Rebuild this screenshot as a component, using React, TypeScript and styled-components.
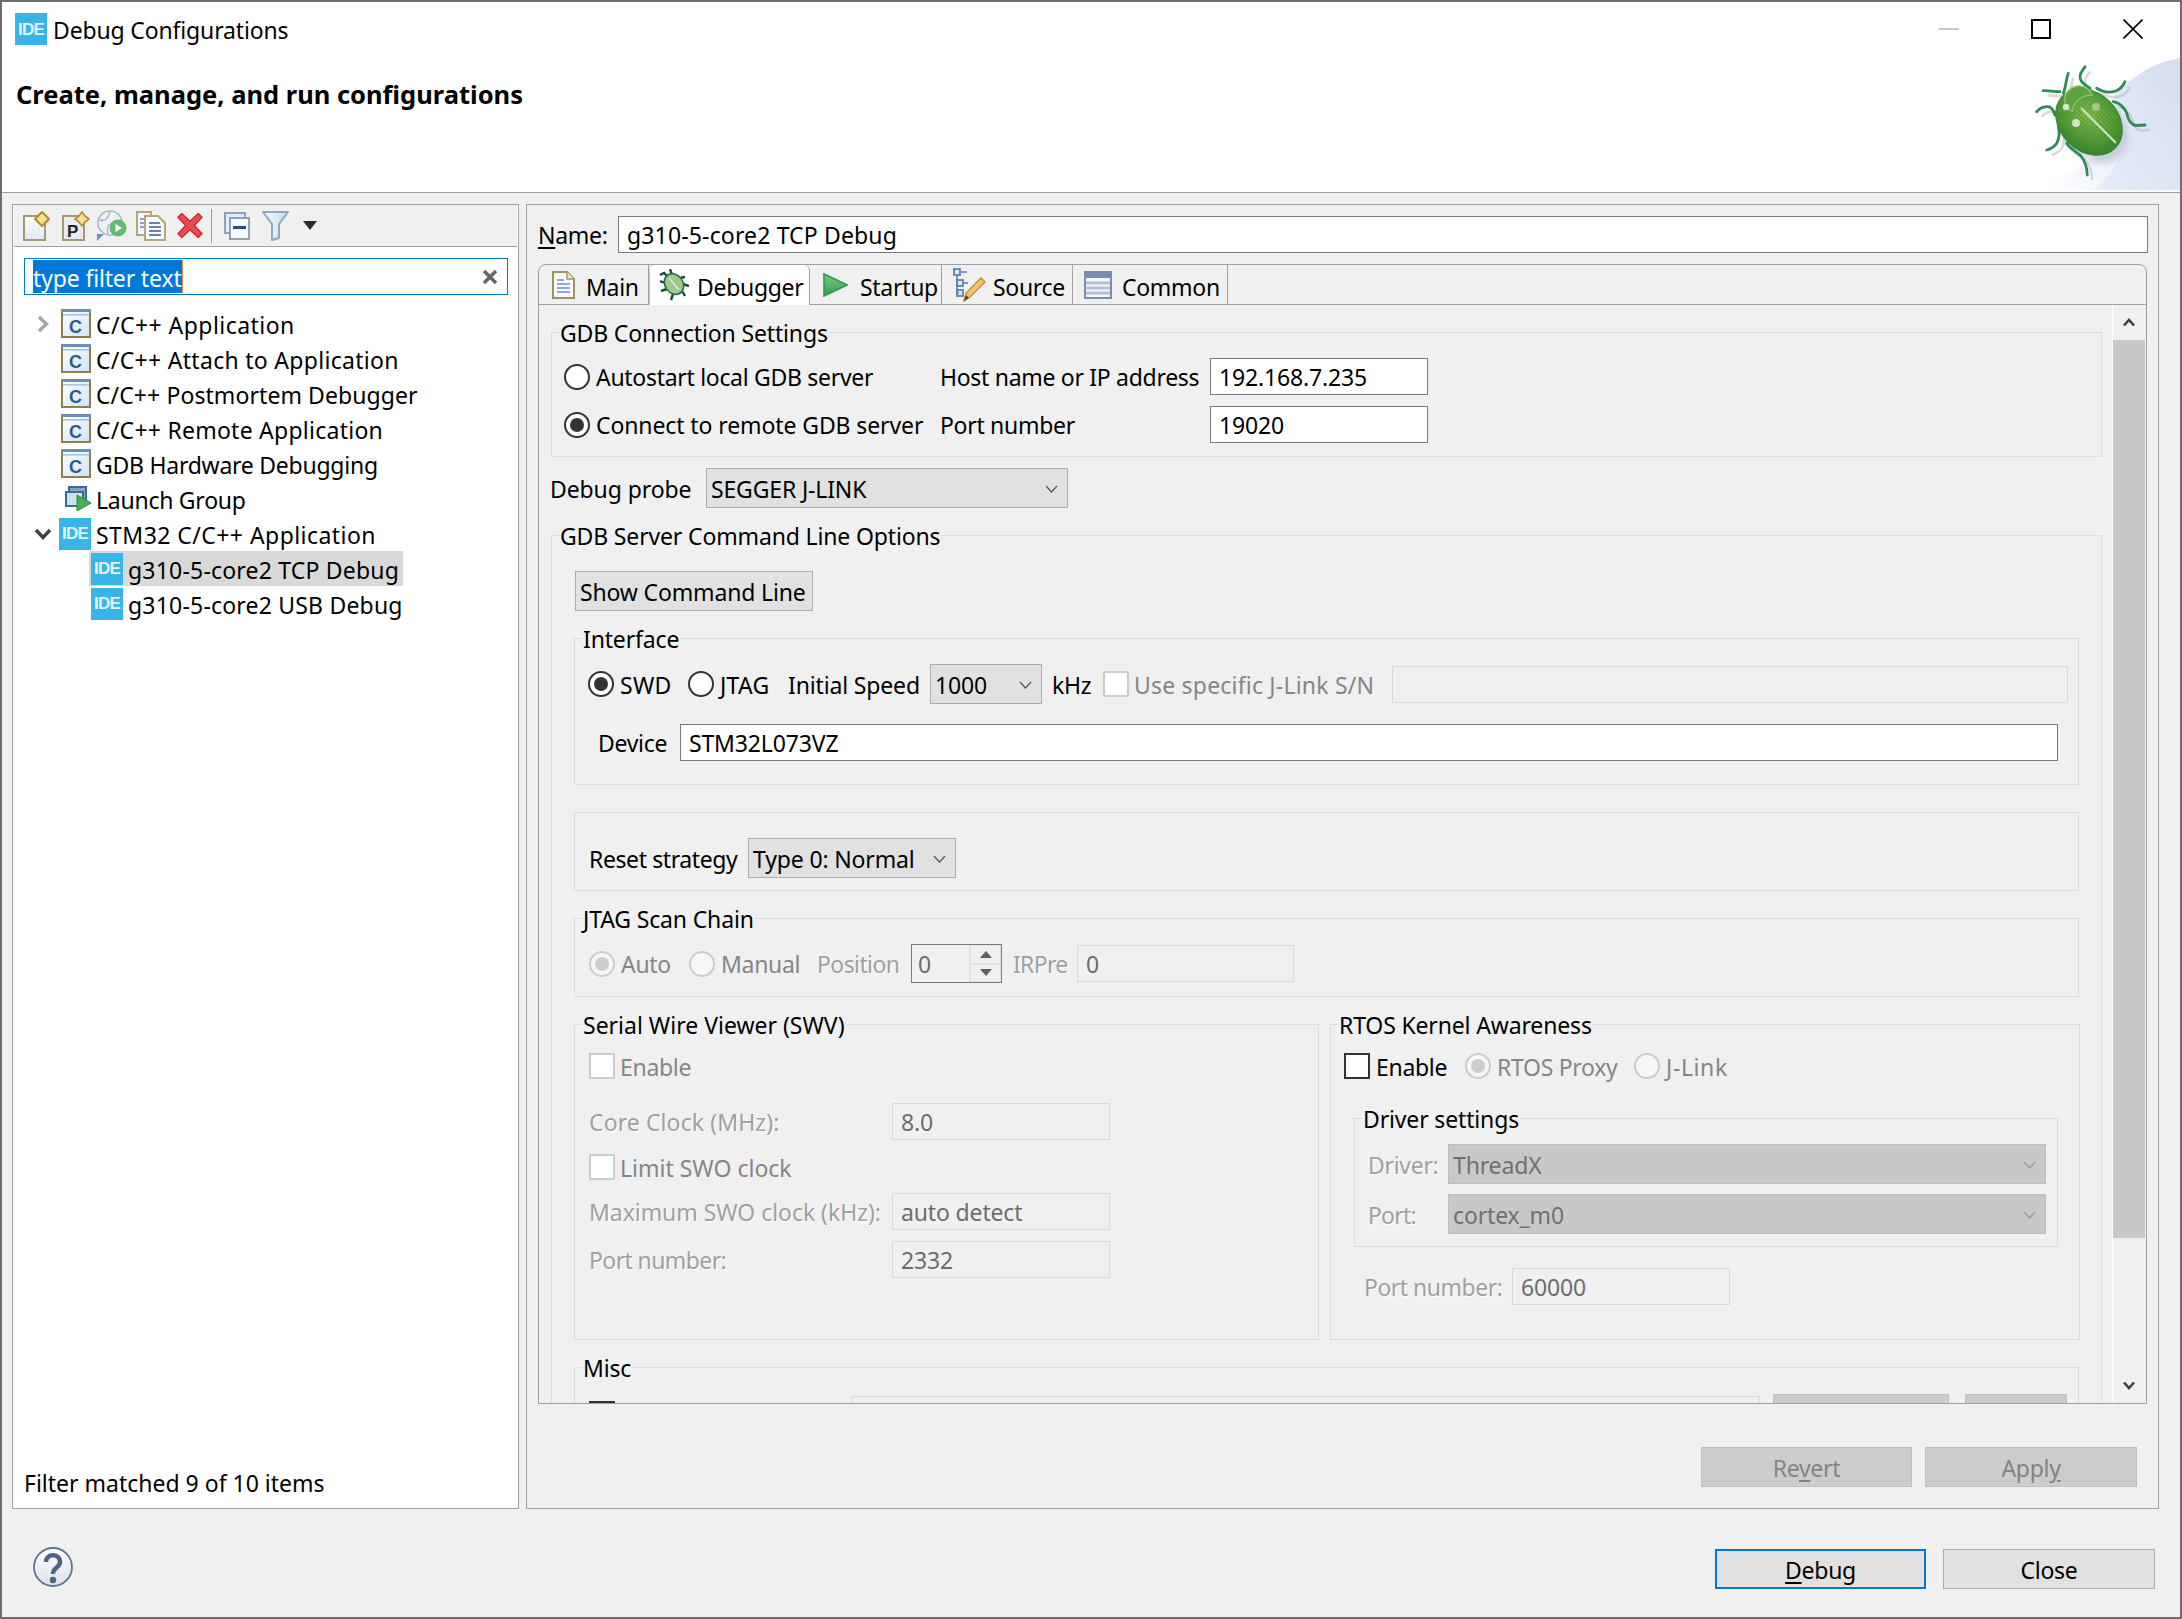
import React from "react";
import styled, { createGlobalStyle, css } from "styled-components";

const Global = createGlobalStyle`
  html, body { margin: 0; padding: 0; background: #f0f0f0; }
  body { font-family: "Noto Sans", "Open Sans", sans-serif; font-size: 23px; color: #000; }
  * { box-sizing: border-box; }
`;

const Win = styled.div`
  width: 2182px; height: 1619px; border: 2px solid #6e6e6e; background: #f0f0f0;
  display: flex; flex-direction: column; overflow: hidden;
`;
const Header = styled.header`
  height: 191px; flex: none; background: #fff; border-bottom: 1px solid #a0a0a0;
`;
const TitleBar = styled.div`
  height: 55px; display: flex; align-items: flex-start; padding: 11px 37px 0 13px;
`;
const IdeBox = styled.span`
  width: 32px; height: 32px; flex: none; background: #39b4e8; color: rgba(255,255,255,.88);
  display: flex; align-items: center; justify-content: center;
  font: bold 17px/1 "Liberation Sans", sans-serif; letter-spacing: -.7px;
`;
const TitleText = styled.div`
  margin-left: 6px; line-height: 32px; letter-spacing: -.15px; padding-top: 1px;
`;
const Controls = styled.div`
  margin-left: auto; display: flex; gap: 72px; padding-top: 6px;
`;
const Banner = styled.div`
  height: 133px; display: flex; justify-content: space-between; padding-left: 14px;
`;
const Heading = styled.h1`
  margin: 21px 0 0; font-size: 25.5px; font-weight: 700; line-height: 32px;
`;
const Body = styled.div`
  flex: none; height: 1305px; margin-top: 11px; padding: 0 0 0 10px; display: flex; gap: 7px;
`;
const LeftPanel = styled.section`
  width: 507px; height: 1305px; border: 1px solid #a0a0a0; background: #fff;
  display: flex; flex-direction: column;
`;
const Toolbar = styled.div`
  height: 42px; flex: none; background: #f0f0f0; border-bottom: 1px solid #a0a0a0; margin: 0 1px;
  display: flex; align-items: center; padding-left: 9px;
`;
const ToolSep = styled.span`
  width: 1px; height: 34px; background: #9a9a9a; margin: 0 12px 0 8px;
`;
const ToolIcon = styled.span<{ $w: number }>`
  width: ${p => p.$w}px; flex: none; display: flex; justify-content: flex-start;
`;
const FilterBox = styled.div`
  margin: 11px 0 0 11px; width: 484px; height: 37px; border: 1px solid #0078d7;
  display: flex; align-items: center; padding: 0 9px 0 8px;
`;
const FilterSel = styled.span`
  width: 150px; height: 33px; line-height: 36px; background: #0078d7; color: #fff;
  white-space: nowrap; letter-spacing: -.15px; border-right: 1px solid #e88a3a; overflow: hidden;
`;
const FilterClear = styled.span`
  margin-left: auto; display: flex;
`;
const Tree = styled.div`
  margin-top: 11px; display: flex; flex-direction: column;
`;
const Row = styled.div`
  height: 35px; display: flex; align-items: center; padding-left: 19px;
`;
const Twist = styled.span`
  width: 27px; flex: none; display: flex; align-items: center; justify-content: center; padding-right: 6px;
`;
const IconSlot = styled.span`
  width: 32px; flex: none; display: flex; justify-content: flex-end;
`;
const RowText = styled.span<{ $ls?: number }>`
  margin-left: 5px; line-height: 32px; padding-top: 2px; white-space: nowrap; letter-spacing: ${p => p.$ls ?? 0.2}px;
`;
const ChildRow = styled.div<{ $selected?: boolean }>`
  height: 35px; width: 314px; margin-left: 76px; display: flex; align-items: center; padding-left: 2px;
  background: ${p => (p.$selected ? "#d9d9d9" : "transparent")};
`;
const MatchNote = styled.div`
  margin: auto 0 9px 11px; line-height: 32px; letter-spacing: 0;
`;
const RightPanel = styled.section`
  width: 1633px; height: 1305px; border: 1px solid #a0a0a0; padding: 11px 0 0 11px;
  display: flex; flex-direction: column;
`;
const NameRow = styled.div`
  display: flex; align-items: center; height: 37px;
`;
const NameLabel = styled.span`
  width: 80px; padding-left: 0; letter-spacing: -.3px; u { text-underline-offset: 3px; }
`;
const Field = styled.div<{ $w: number; $off?: boolean; $ls?: number }>`
  width: ${p => p.$w}px; height: 37px; flex: none; display: flex; align-items: center;
  padding: 1px 0 0 8px; white-space: nowrap; letter-spacing: ${p => p.$ls ?? -0.15}px;
  ${p => p.$off
    ? css`border: 1px solid #d9d9d9; background: #f0f0f0; color: #6d6d6d;`
    : css`border: 1px solid #7a7a7a; background: #fff;`}
`;
const Folder = styled.div`
  width: 1609px; height: 1140px; margin-top: 11px; border: 1px solid #a0a0a0; border-radius: 8px 8px 0 0;
  display: flex; flex-direction: column; flex: none;
`;
const TabStrip = styled.div`
  height: 40px; flex: none; display: flex; border-bottom: 1px solid #a0a0a0;
`;
const Tab = styled.div<{ $w: number; $active?: boolean; $gap: number; $pad: number }>`
  width: ${p => p.$w}px; flex: none; display: flex; align-items: center; gap: ${p => p.$gap}px;
  padding-left: ${p => p.$pad}px; border-right: 1px solid #a0a0a0; letter-spacing: -.3px;
  height: ${p => (p.$active ? 40 : 39)}px;
  ${p => p.$active && css`background: #fff; border-left: 1px solid #c8c8c8; border-radius: 6px 6px 0 0; position: relative; z-index: 1;`}
`;
const TabLabel = styled.span`
  padding-top: 4px;
`;
const TabBody = styled.div`
  flex: 1; min-height: 0; display: flex;
`;
const Scroller = styled.div`
  width: 1573px; flex: none; overflow: hidden; padding-left: 12px;
`;
const ScrollBar = styled.div`
  width: 33px; flex: none; border-left: 1px solid #fff; display: flex; flex-direction: column;
`;
const ScrollBtn = styled.div`
  height: 35px; flex: none; display: flex; align-items: center; justify-content: center;
`;
const ScrollThumb = styled.div`
  height: 898px; flex: none; background: #c8c8c8;
`;
const ScrollGap = styled.div`
  flex: 1;
`;
const Group = styled.fieldset<{ $w?: number; $mt?: number; $pt?: number; $pb?: number; $pl?: number; $ml?: number }>`
  display: block; min-width: 0; margin: ${p => p.$mt ?? 12}px 0 0 ${p => p.$ml ?? 0}px;
  padding: ${p => p.$pt ?? 11}px 0 ${p => p.$pb ?? 13}px ${p => p.$pl ?? 14}px;
  width: ${p => (p.$w ? `${p.$w}px` : "auto")}; flex: none;
  border: 1px solid #dcdcdc;
  & > legend { margin-left: ${p => 7 - (p.$pl ?? 14)}px; }
`;
const Legend = styled.legend<{ $ls?: number }>`
  height: 30px; line-height: 32px; padding: 0 1px; white-space: nowrap; letter-spacing: ${p => p.$ls ?? -0.15}px;
`;
const FlexRow = styled.div<{ $mt?: number; $h?: number; $ml?: number }>`
  display: flex; align-items: center; margin-top: ${p => p.$mt ?? 0}px; margin-left: ${p => p.$ml ?? 0}px;
  height: ${p => p.$h ?? 37}px;
`;
const Text = styled.span<{ $w?: number; $tone?: "off" | "etched"; $ml?: number; $ls?: number }>`
  ${p => (p.$w ? `width: ${p.$w}px;` : "")} flex: none; white-space: nowrap; letter-spacing: ${p => p.$ls ?? -0.3}px;
  margin-left: ${p => p.$ml ?? 0}px; padding-top: 1px;
  ${p => p.$tone === "off" && "color: #858585;"}
  ${p => p.$tone === "etched" && "color: #a0a0a0; text-shadow: 1px 1px 0 #fff;"}
`;
const Radio = styled.span<{ $on?: boolean; $off?: boolean }>`
  width: 26px; height: 26px; flex: none; border-radius: 50%; background: ${p => (p.$off ? "#f6f6f6" : "#fff")};
  border: 2px solid ${p => (p.$off ? "#cccccc" : "#333")}; display: flex; align-items: center; justify-content: center;
  margin-right: 6px;
  &::after { content: ""; width: 14px; height: 14px; border-radius: 50%;
    background: ${p => (p.$on ? (p.$off ? "#cccccc" : "#333") : "transparent")}; }
`;
const Check = styled.span<{ $off?: boolean; $mr?: number }>`
  width: 26px; height: 26px; flex: none; background: #fff; margin-right: ${p => p.$mr ?? 6}px;
  border: 2px solid ${p => (p.$off ? "#cccccc" : "#333")};
`;
const Combo = styled.div<{ $w: number; $off?: boolean }>`
  width: ${p => p.$w}px; height: 40px; flex: none; display: flex; align-items: center; justify-content: space-between;
  padding: 1px 9px 0 4px; white-space: nowrap; letter-spacing: -.15px;
  ${p => p.$off
    ? css`background: #c8c8c8; border: 1px solid #bdbdbd; color: #707070;`
    : css`background: #e1e1e1; border: 1px solid #adadad;`}
`;
const PushButton = styled.div<{ $w: number; $kind?: "off" | "focus" }>`
  width: ${p => p.$w}px; height: 40px; flex: none; display: flex; align-items: center; justify-content: center;
  background: #e1e1e1; border: 1px solid #adadad; letter-spacing: -.3px; white-space: nowrap; padding-top: 2px;
  ${p => p.$kind === "off" && css`background: #cccccc; border-color: #bfbfbf; color: #838383;`}
  ${p => p.$kind === "focus" && css`border: 2px solid #0078d7;`}
  u { text-underline-offset: 3px; }
`;
const CmdButton = styled(PushButton)`
  margin: 21px 0 0 1px; justify-content: flex-start; padding-left: 4px; letter-spacing: -.15px;
`;
const Pair = styled.div`
  display: flex; gap: 11px; margin-top: 12px; width: 1506px;
`;
const ActionRow = styled.div`
  display: flex; justify-content: flex-end; gap: 13px; width: 1599px; margin-top: 43px;
`;
const Footer = styled.footer`
  flex: 1; display: flex; align-items: flex-start; padding: 40px 25px 0 31px; gap: 17px;
`;
const HelpSlot = styled.div`
  margin-right: auto; margin-top: -2px; display: flex;
`;
const Spinner = styled.div`
  width: 91px; height: 39px; flex: none; border: 1px solid #7a7a7a; display: flex; align-items: center;
  padding-left: 6px; color: #6d6d6d; justify-content: space-between;
`;
const SpinBtns = styled.div`
  width: 32px; height: 37px; display: flex; flex-direction: column; border-left: 1px solid #e2e2e2;
`;
const SpinBtn = styled.div<{ $down?: boolean }>`
  flex: 1; display: flex; align-items: center; justify-content: center;
  background: #f0f0f0; border: 1px solid #e2e2e2;
  &::after { content: ""; border-left: 6px solid transparent; border-right: 6px solid transparent;
    ${p => (p.$down ? "border-top: 7px solid #606060;" : "border-bottom: 7px solid #606060;")} }
`;
const Spacer = styled.span<{ $w: number }>`
  width: ${p => p.$w}px; flex: none;
`;

const Chevron = ({ off }: { off?: boolean }) => (
  <svg width="13" height="8" viewBox="0 0 13 8"><polyline points="1,1 6.5,7 12,1" fill="none" stroke={off ? "#9a9a9a" : "#555"} strokeWidth="1.2" /></svg>
);
const Diamond = ({ x, y }: { x: number; y: number }) => (
  <g transform={`translate(${x} ${y})`}>
    <path d="M0-7L7 0L0 7L-7 0Z" fill="#f5e29a" stroke="#b78a25" strokeWidth="2" />
  </g>
);
const NewIcon = () => (
  <svg width="27" height="30" viewBox="0 0 27 30">
    <defs><linearGradient id="ng" x1="0" y1="0" x2="0" y2="1"><stop offset="0" stopColor="#fff" /><stop offset="1" stopColor="#dfe7f4" /></linearGradient></defs>
    <path d="M1 5H17L22 10V29H1Z" fill="url(#ng)" stroke="#a49a72" strokeWidth="2" />
    <Diamond x={19} y={8} />
  </svg>
);
const ProtoIcon = () => (
  <svg width="28" height="30" viewBox="0 0 28 30">
    <path d="M1 5H17L22 10V29H1Z" fill="#e8ecf2" stroke="#a49a72" strokeWidth="2" />
    <text x="5" y="26" fontFamily="Liberation Sans" fontWeight="700" fontSize="17" fill="#222">P</text>
    <path d="M20 1L23 5L27 8L23 11L20 15L17 11L13 8L17 5Z" fill="#f5e29a" stroke="#b78a25" strokeWidth="1.6" />
  </svg>
);
const LaunchIcon = () => (
  <svg width="31" height="32" viewBox="0 0 31 32">
    <circle cx="14" cy="13" r="12" fill="#eef2f8" stroke="#a8b4c8" strokeWidth="1.6" />
    <path d="M4 10C9 12 12 8 14 2M12 24C10 16 13 12 20 13" fill="none" stroke="#a8b4c8" strokeWidth="1.4" />
    <circle cx="22" cy="18" r="8.5" fill="#66b96f" />
    <path d="M19.5 14L26 18L19.5 22Z" fill="#fff" />
    <path d="M1 24H8L1 31Z" fill="#6f8fc0" />
  </svg>
);
const DupIcon = () => (
  <svg width="30" height="30" viewBox="0 0 30 30">
    <path d="M1 1H15V24H1Z" fill="#f4f6fa" stroke="#b3a678" strokeWidth="2" />
    <path d="M9 5H22L29 12V29H9Z" fill="#fbfcfe" stroke="#b3a678" strokeWidth="2" />
    <path d="M13 12H24M13 16H25M13 20H25M13 24H25" stroke="#6a84b0" strokeWidth="2" />
    <path d="M4 8H8M4 12H8M4 16H8" stroke="#6a84b0" strokeWidth="1.6" />
  </svg>
);
const DeleteIcon = () => (
  <svg width="27" height="27" viewBox="0 0 27 27">
    <path d="M5 1L13.5 9L22 1L26 5L18 13.5L26 22L22 26L13.5 18L5 26L1 22L9 13.5L1 5Z" fill="#ea4b4f" stroke="#c82a2e" strokeWidth="1.4" strokeLinejoin="round" />
  </svg>
);
const CollapseIcon = () => (
  <svg width="26" height="28" viewBox="0 0 26 28">
    <rect x="1" y="1" width="20" height="20" fill="#e4edf7" stroke="#8ea2bd" strokeWidth="2" />
    <rect x="6" y="6" width="19" height="21" fill="#f4fafe" stroke="#8ea2bd" strokeWidth="2" />
    <rect x="9" y="14" width="13" height="3" fill="#1e4f85" />
  </svg>
);
const FilterIcon = () => (
  <svg width="27" height="30" viewBox="0 0 27 30">
    <defs><linearGradient id="fg" x1="0" y1="0" x2="1" y2="0"><stop offset="0" stopColor="#f4fbfe" /><stop offset="1" stopColor="#c4dfef" /></linearGradient></defs>
    <path d="M1 1H26L17 13V27L10 29V13Z" fill="url(#fg)" stroke="#93a8c0" strokeWidth="2" strokeLinejoin="round" />
  </svg>
);
const DropTri = () => (
  <svg width="14" height="9" viewBox="0 0 14 9"><path d="M0 0H14L7 9Z" fill="#2a2a2a" /></svg>
);
const ClearX = () => (
  <svg width="16" height="16" viewBox="0 0 16 16"><path d="M2 2L14 14M14 2L2 14" stroke="#666" strokeWidth="3.4" /></svg>
);
const CIcon = () => (
  <svg width="30" height="29" viewBox="0 0 30 29">
    <defs><linearGradient id="cg" x1="0" y1="0" x2="1" y2="1"><stop offset="0" stopColor="#fff" /><stop offset="1" stopColor="#cfe4f6" /></linearGradient></defs>
    <rect x="1" y="1" width="28" height="27" fill="url(#cg)" stroke="#8d7f47" strokeWidth="2" />
    <rect x="0" y="0" width="30" height="3" fill="#6a8fb7" />
    <rect x="2" y="5" width="26" height="1.6" fill="#a8c4e0" />
    <text x="8" y="23.5" fontFamily="Liberation Sans" fontWeight="700" fontSize="18" fill="#2a5888">C</text>
  </svg>
);
const GroupIcon = () => (
  <svg width="26" height="25" viewBox="0 0 26 25">
    <rect x="4" y="1" width="17" height="16" fill="#7fa6c9" stroke="#3b6d93" strokeWidth="2" />
    <rect x="1" y="6" width="17" height="14" fill="#cfe2f2" stroke="#3b6d93" strokeWidth="2" />
    <path d="M12 9L26 17L12 25Z" fill="#4cae4f" stroke="#2c8a35" strokeWidth="1" />
  </svg>
);
const ChevRight = () => (
  <svg width="12" height="18" viewBox="0 0 12 18"><polyline points="2,2 9.5,9 2,16" fill="none" stroke="#a6a6a6" strokeWidth="3.4" /></svg>
);
const ChevDown = () => (
  <svg width="18" height="12" viewBox="0 0 18 12"><polyline points="2,2 9,9.5 16,2" fill="none" stroke="#404040" strokeWidth="3.4" /></svg>
);
const MainIcon = () => (
  <svg width="23" height="28" viewBox="0 0 23 28">
    <path d="M1 1H15L22 8V27H1Z" fill="#f6f8fc" stroke="#a1915a" strokeWidth="2" />
    <path d="M15 1V8H22" fill="#eee6c8" stroke="#a1915a" strokeWidth="1.4" />
    <path d="M5 9H12M5 13H18M5 17H18M5 21H18" stroke="#8fa7d1" strokeWidth="2" />
  </svg>
);
const SmallBug = () => (
  <svg width="30" height="32" viewBox="0 0 30 32">
    <g stroke="#0f4f3a" strokeWidth="2.4" fill="none">
      <path d="M9 8L5 4L1 6M13 6L11 0M21 9L26 8M24 15L30 17M23 22L26 27M14 25L12 31M8 20L2 22M6 14L1 12" />
    </g>
    <ellipse cx="15" cy="15" rx="9" ry="11" transform="rotate(-35 15 15)" fill="#9dc98a" stroke="#2e6b48" strokeWidth="1.6" />
    <path d="M10 9L20 21" stroke="#e3f0d8" strokeWidth="1.2" />
  </svg>
);
const PlayIcon = () => (
  <svg width="25" height="24" viewBox="0 0 25 24">
    <defs><linearGradient id="pg" x1="0" y1="0" x2="0" y2="1"><stop offset="0" stopColor="#7ccb7c" /><stop offset="1" stopColor="#2f9e4f" /></linearGradient></defs>
    <path d="M1 1L24 12L1 23Z" fill="url(#pg)" stroke="#2d9a52" strokeWidth="1.6" />
  </svg>
);
const SourceIcon = () => (
  <svg width="33" height="34" viewBox="0 0 33 34">
    <g fill="#dfe8f5" stroke="#5d80b4" strokeWidth="1.8">
      <rect x="1" y="1" width="6" height="6" /><rect x="4" y="12" width="6" height="6" /><rect x="4" y="22" width="6" height="6" />
    </g>
    <path d="M4 7V25H6M8 4H14M10 15H15" fill="none" stroke="#5d80b4" strokeWidth="1.6" />
    <path d="M11 33L13 25L28 10L32 14L17 29Z" fill="#f3c26b" stroke="#c68a3a" strokeWidth="1.4" />
    <path d="M11 33L13 27L16 30Z" fill="#5a4630" />
  </svg>
);
const TableIcon = () => (
  <svg width="28" height="28" viewBox="0 0 28 28">
    <rect x="1" y="1" width="26" height="26" fill="#f5f7fb" stroke="#7c8cae" strokeWidth="2" />
    <rect x="1" y="1" width="26" height="6" fill="#7c8cae" />
    <path d="M2 12H26M2 17H26M2 22H26" stroke="#b8c0d4" strokeWidth="3" />
  </svg>
);
const HelpIcon = () => (
  <svg width="40" height="40" viewBox="0 0 40 40">
    <defs><linearGradient id="hg" x1="0" y1="0" x2="0" y2="1"><stop offset="0" stopColor="#fff" /><stop offset="1" stopColor="#dcdfe6" /></linearGradient></defs>
    <circle cx="20" cy="20" r="19" fill="url(#hg)" stroke="#5f7391" strokeWidth="1.8" />
    <path d="M13 15C13 6 27 6 27 15C27 21 20 20 20 27" fill="none" stroke="#4f6385" strokeWidth="4.4" />
    <circle cx="20" cy="33" r="3.2" fill="#4f6385" />
  </svg>
);
const legs = "M29.3 36.3C32 30 32 22 34.3 16.3M26 34.7C20 35 15 33 9.3 33.7M56 31.3C52 28 46 26 46 19.7C46 15 49 13 51 9.7M62.7 31.3C70 36 76 36 82 34C87 32 89 29 91 24.7M79.3 44.7C86 46 90 50 92.7 56C94 62 97 68 102 68.5L111 68M21 58C19 52 16 49 12.7 49.7C8 50 5 52 2.7 54.7M24.3 69.7C26 76 25 82 22.7 86.3C20 90 16 92 12.7 93M32.7 86.3C36 92 42 94 47 99C51 104 53 110 53.3 118";
const BugArt = () => (
  <svg width="146" height="133" viewBox="0 0 146 133">
    <defs>
      <linearGradient id="bgg" x1="0.1" y1="1" x2="1" y2="0.45"><stop offset="0" stopColor="#fff" /><stop offset="1" stopColor="#d7e0f3" /></linearGradient>
      <radialGradient id="bb" cx="0.42" cy="0.42" r="0.7"><stop offset="0" stopColor="#86bd52" /><stop offset=".6" stopColor="#549a34" /><stop offset="1" stopColor="#2c7a2a" /></radialGradient>
      <pattern id="dots" width="3" height="3" patternUnits="userSpaceOnUse"><circle cx="1" cy="1" r=".8" fill="#2a7226" opacity=".7" /></pattern>
      <filter id="sh" x="-20%" y="-20%" width="140%" height="140%"><feGaussianBlur stdDeviation="3" /></filter>
    </defs>
    <path d="M146 1C118 6 96 20 80 40C90 80 60 110 0 133H146Z" fill="url(#bgg)" />
    <path d="M146 45C128 47 112 52 100 60C96 90 80 115 60 133H146Z" fill="#dbe3f5" opacity=".55" />
    <ellipse cx="60" cy="72" rx="38" ry="30" transform="rotate(45 60 72)" fill="#8890a8" opacity=".35" filter="url(#sh)" />
    <path d={legs} transform="translate(5 5)" fill="none" stroke="#b9bfcc" strokeWidth="2.6" opacity=".6" />
    <path d={legs} fill="none" stroke="#2e8a58" strokeWidth="2.8" strokeLinecap="round" strokeLinejoin="round" />
    <ellipse cx="55" cy="65" rx="37" ry="29" transform="rotate(45 55 65)" fill="url(#bb)" stroke="#3c8a3a" strokeWidth="1.2" />
    <ellipse cx="55" cy="65" rx="37" ry="29" transform="rotate(45 55 65)" fill="url(#dots)" />
    <path d="M34 34C42 26 54 28 58 38C48 38 40 44 38 54C30 50 28 40 34 34Z" fill="#5ba53c" stroke="#8cc07a" strokeWidth="1.4" />
    <path d="M47 51L82 86" stroke="#cfe6c4" strokeWidth="2" />
    <circle cx="32" cy="50" r="3.2" fill="#e6f2df" opacity=".85" />
    <circle cx="42" cy="66" r="4" fill="#e6f2df" opacity=".85" />
    <circle cx="62" cy="50" r="4" fill="#cde3b8" opacity=".6" />
  </svg>
);
const Minimize = () => <svg width="20" height="20" viewBox="0 0 20 20"><rect x="0" y="9" width="20" height="2" fill="#c8c8c8" /></svg>;
const Maximize = () => <svg width="20" height="20" viewBox="0 0 20 20"><rect x="1" y="1" width="18" height="18" fill="none" stroke="#000" strokeWidth="2" /></svg>;
const CloseX = () => <svg width="20" height="20" viewBox="0 0 20 20"><path d="M0.5 0.5L19.5 19.5M19.5 0.5L0.5 19.5" stroke="#000" strokeWidth="1.6" /></svg>;
const UpChev = () => <svg width="12" height="9" viewBox="0 0 12 9"><polyline points="1,7.5 6,2 11,7.5" fill="none" stroke="#404040" strokeWidth="2.6" /></svg>;
const DownChev = () => <svg width="12" height="9" viewBox="0 0 12 9"><polyline points="1,1.5 6,7 11,1.5" fill="none" stroke="#404040" strokeWidth="2.6" /></svg>;

const treeTop: [string, number][] = [
  ["C/C++ Application", 0.45],
  ["C/C++ Attach to Application", 0.3],
  ["C/C++ Postmortem Debugger", 0.08],
  ["C/C++ Remote Application", 0.25],
  ["GDB Hardware Debugging", -0.25],
];

export default function App() {
  return (
    <Win>
      <Global />
      <Header>
        <TitleBar>
          <IdeBox>IDE</IdeBox>
          <TitleText>Debug Configurations</TitleText>
          <Controls><Minimize /><Maximize /><CloseX /></Controls>
        </TitleBar>
        <Banner>
          <Heading>Create, manage, and run configurations</Heading>
          <BugArt />
        </Banner>
      </Header>
      <Body>
        <LeftPanel>
          <Toolbar>
            <ToolIcon $w={39}><NewIcon /></ToolIcon>
            <ToolIcon $w={34}><ProtoIcon /></ToolIcon>
            <ToolIcon $w={40}><LaunchIcon /></ToolIcon>
            <ToolIcon $w={41}><DupIcon /></ToolIcon>
            <ToolIcon $w={26}><DeleteIcon /></ToolIcon>
            <ToolSep />
            <ToolIcon $w={38}><CollapseIcon /></ToolIcon>
            <ToolIcon $w={41}><FilterIcon /></ToolIcon>
            <ToolIcon $w={14}><DropTri /></ToolIcon>
          </Toolbar>
          <FilterBox>
            <FilterSel>type filter text</FilterSel>
            <FilterClear><ClearX /></FilterClear>
          </FilterBox>
          <Tree>
            {treeTop.map(([t, ls], i) => (
              <Row key={t}>
                <Twist>{i === 0 && <ChevRight />}</Twist>
                <IconSlot><CIcon /></IconSlot>
                <RowText $ls={ls}>{t}</RowText>
              </Row>
            ))}
            <Row>
              <Twist />
              <IconSlot><GroupIcon /></IconSlot>
              <RowText $ls={-0.25}>Launch Group</RowText>
            </Row>
            <Row>
              <Twist><ChevDown /></Twist>
              <IconSlot><IdeBox>IDE</IdeBox></IconSlot>
              <RowText $ls={0.45}>STM32 C/C++ Application</RowText>
            </Row>
            <ChildRow $selected>
              <IdeBox>IDE</IdeBox>
              <RowText>g310-5-core2 TCP Debug</RowText>
            </ChildRow>
            <ChildRow>
              <IdeBox>IDE</IdeBox>
              <RowText>g310-5-core2 USB Debug</RowText>
            </ChildRow>
          </Tree>
          <MatchNote>Filter matched 9 of 10 items</MatchNote>
        </LeftPanel>
        <RightPanel>
          <NameRow>
            <NameLabel><u>N</u>ame:</NameLabel>
            <Field $w={1530} $ls={0.15}>g310-5-core2 TCP Debug</Field>
          </NameRow>
          <Folder>
            <TabStrip>
              <Tab $w={110} $gap={11} $pad={13}><MainIcon /><TabLabel>Main</TabLabel></Tab>
              <Tab $w={161} $gap={8} $pad={9} $active><SmallBug /><TabLabel>Debugger</TabLabel></Tab>
              <Tab $w={132} $gap={12} $pad={13}><PlayIcon /><TabLabel>Startup</TabLabel></Tab>
              <Tab $w={131} $gap={7} $pad={11}><SourceIcon /><TabLabel>Source</TabLabel></Tab>
              <Tab $w={155} $gap={10} $pad={11}><TableIcon /><TabLabel>Common</TabLabel></Tab>
            </TabStrip>
            <TabBody>
              <Scroller>
                <Group $w={1551} $pl={12}>
                  <Legend>GDB Connection Settings</Legend>
                  <FlexRow>
                    <Radio /><Text $w={344}>Autostart local GDB server</Text>
                    <Text $w={270}>Host name or IP address</Text>
                    <Field $w={218}>192.168.7.235</Field>
                  </FlexRow>
                  <FlexRow $mt={11}>
                    <Radio $on /><Text $w={344} $ls={-0.1}>Connect to remote GDB server</Text>
                    <Text $w={270}>Port number</Text>
                    <Field $w={218}>19020</Field>
                  </FlexRow>
                </Group>
                <FlexRow $mt={11} $h={40}>
                  <Text $w={156} $ml={-1} $ls={-0.1}>Debug probe</Text>
                  <Combo $w={362}>SEGGER J-LINK<Chevron /></Combo>
                </FlexRow>
                <Group $w={1551} $pl={22} $pt={0} $pb={0}>
                  <Legend>GDB Server Command Line Options</Legend>
                  <CmdButton $w={238}>Show Command Line</CmdButton>
                  <Group $w={1505} $pb={23} $pl={13}>
                    <Legend>Interface</Legend>
                    <FlexRow $h={40}>
                      <Radio $on /><Text $w={68} $ls={0.3}>SWD</Text>
                      <Radio /><Text $w={68} $ls={0.3}>JTAG</Text>
                      <Text $w={142} $ls={-0.15}>Initial Speed</Text>
                      <Combo $w={112}>1000<Chevron /></Combo>
                      <Text $w={51} $ml={10}>kHz</Text>
                      <Check $off $mr={5} /><Text $w={258} $tone="off" $ls={0.2}>Use specific J-Link S/N</Text>
                      <Field $w={676} $off />
                    </FlexRow>
                    <FlexRow $mt={20}>
                      <Text $w={82} $ml={10}>Device</Text>
                      <Field $w={1378}>STM32L073VZ</Field>
                    </FlexRow>
                  </Group>
                  <Group $w={1505} $mt={27} $pt={25} $pb={12}>
                    <FlexRow $h={40}>
                      <Text $w={159} $ls={-0.4}>Reset strategy</Text>
                      <Combo $w={208}>Type 0: Normal<Chevron /></Combo>
                    </FlexRow>
                  </Group>
                  <Group $w={1505}>
                    <Legend>JTAG Scan Chain</Legend>
                    <FlexRow $h={39}>
                      <Radio $on $off /><Text $w={68} $tone="off">Auto</Text>
                      <Radio $off /><Text $w={96} $tone="off">Manual</Text>
                      <Text $w={94} $tone="etched" $ls={-0.6}>Position</Text>
                      <Spinner>0<SpinBtns><SpinBtn /><SpinBtn $down /></SpinBtns></Spinner>
                      <Text $w={64} $ml={11} $tone="etched" $ls={-0.7}>IRPre</Text>
                      <Field $w={217} $off>0</Field>
                    </FlexRow>
                  </Group>
                  <Pair>
                    <Group $w={745} $mt={0} $pt={14} $pb={61}>
                      <Legend $ls={0}>Serial Wire Viewer (SWV)</Legend>
                      <FlexRow $h={26}>
                        <Check $off $mr={5} /><Text $tone="off">Enable</Text>
                      </FlexRow>
                      <FlexRow $mt={24}>
                        <Text $w={303} $tone="etched" $ls={0.1}>Core Clock (MHz):</Text>
                        <Field $w={218} $off>8.0</Field>
                      </FlexRow>
                      <FlexRow $mt={14} $h={26}>
                        <Check $off $mr={5} /><Text $tone="off" $ls={0}>Limit SWO clock</Text>
                      </FlexRow>
                      <FlexRow $mt={13}>
                        <Text $w={303} $tone="etched" $ls={-0.05}>Maximum SWO clock (kHz):</Text>
                        <Field $w={218} $off>auto detect</Field>
                      </FlexRow>
                      <FlexRow $mt={11}>
                        <Text $w={303} $tone="etched" $ls={-0.6}>Port number:</Text>
                        <Field $w={218} $off>2332</Field>
                      </FlexRow>
                    </Group>
                    <Group $w={750} $mt={0} $pt={14} $pb={33} $pl={13}>
                      <Legend>RTOS Kernel Awareness</Legend>
                      <FlexRow $h={26}>
                        <Check /><Text $w={89}>Enable</Text>
                        <Radio $on $off /><Text $w={137} $tone="off">RTOS Proxy</Text>
                        <Radio $off /><Text $tone="off" $ls={0.6}>J-Link</Text>
                      </FlexRow>
                      <Group $w={704} $mt={24} $ml={10} $pb={12} $pl={13}>
                        <Legend>Driver settings</Legend>
                        <FlexRow $h={40}>
                          <Text $w={80} $tone="etched">Driver:</Text>
                          <Combo $w={598} $off>ThreadX<Chevron off /></Combo>
                        </FlexRow>
                        <FlexRow $h={40} $mt={10}>
                          <Text $w={80} $tone="etched" $ls={-0.8}>Port:</Text>
                          <Combo $w={598} $off>cortex_m0<Chevron off /></Combo>
                        </FlexRow>
                      </Group>
                      <FlexRow $mt={21} $ml={20}>
                        <Text $w={148} $tone="etched" $ls={-0.5}>Port number:</Text>
                        <Field $w={218} $off>60000</Field>
                      </FlexRow>
                    </Group>
                  </Pair>
                  <Group $w={1505} $pt={12}>
                    <Legend>Misc</Legend>
                    <FlexRow $h={40}>
                      <Check />
                      <Spacer $w={231} />
                      <Field $w={908} $off />
                      <Spacer $w={13} />
                      <PushButton $w={176} $kind="off" />
                      <Spacer $w={16} />
                      <PushButton $w={102} $kind="off" />
                    </FlexRow>
                  </Group>
                </Group>
              </Scroller>
              <ScrollBar>
                <ScrollBtn><UpChev /></ScrollBtn>
                <ScrollThumb />
                <ScrollGap />
                <ScrollBtn><DownChev /></ScrollBtn>
              </ScrollBar>
            </TabBody>
          </Folder>
          <ActionRow>
            <PushButton $w={211} $kind="off"><span>Re<u>v</u>ert</span></PushButton>
            <PushButton $w={212} $kind="off"><span>Appl<u>y</u></span></PushButton>
          </ActionRow>
        </RightPanel>
      </Body>
      <Footer>
        <HelpSlot><HelpIcon /></HelpSlot>
        <PushButton $w={211} $kind="focus"><span><u>D</u>ebug</span></PushButton>
        <PushButton $w={212}>Close</PushButton>
      </Footer>
    </Win>
  );
}
